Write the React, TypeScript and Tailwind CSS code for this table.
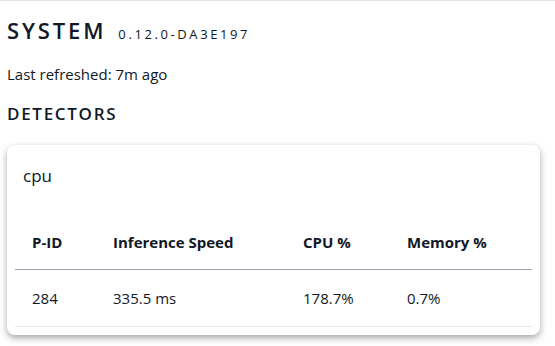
import React from "react";

export default function App() {
  const font = { fontFamily: '"Open Sans", "Noto Sans", sans-serif' };
  return (
    <div className="w-[555px] h-[346px] bg-white border-t border-[#e5e5e5] overflow-hidden text-[#111827]" style={font}>
      <div className="px-[7px] pt-[15px]">
        <div className="flex items-baseline gap-[12px]">
          <h1 className="text-[22px] font-semibold tracking-[0.13em] leading-[28px]">SYSTEM</h1>
          <span className="text-[13px] font-medium tracking-[0.2em]">0.12.0-DA3E197</span>
        </div>
        <div className="mt-[19px] text-[15px] leading-[20px]">Last refreshed: 7m ago</div>
        <h2 className="mt-[19px] text-[17px] font-semibold tracking-[0.1em] leading-[22px]">DETECTORS</h2>
      </div>
      <div className="mx-[7px] mt-[20px] w-[533px] h-[190px] rounded-[8px] bg-white shadow-[0_3px_7px_rgba(0,0,0,0.35)] px-[8px] pt-[20px]">
        <div className="pl-[8px] text-[17px] leading-[22px]">cpu</div>
        <table className="mt-[28px] w-[517px] text-[15px] border-collapse">
          <thead>
            <tr className="border-b border-[#9ca3af] h-[55px]">
              <th className="w-[82px] pl-[17px] text-left font-bold">P-ID</th>
              <th className="w-[190px] pl-[16px] text-left font-bold">Inference Speed</th>
              <th className="w-[104px] pl-[16px] text-left font-bold">CPU %</th>
              <th className="pl-[16px] text-left font-bold">Memory %</th>
            </tr>
          </thead>
          <tbody>
            <tr className="border-b border-[#e5e7eb] h-[57px]">
              <td className="pl-[17px]">284</td>
              <td className="pl-[16px]">335.5 ms</td>
              <td className="pl-[16px]">178.7%</td>
              <td className="pl-[16px]">0.7%</td>
            </tr>
          </tbody>
        </table>
      </div>
    </div>
  );
}
